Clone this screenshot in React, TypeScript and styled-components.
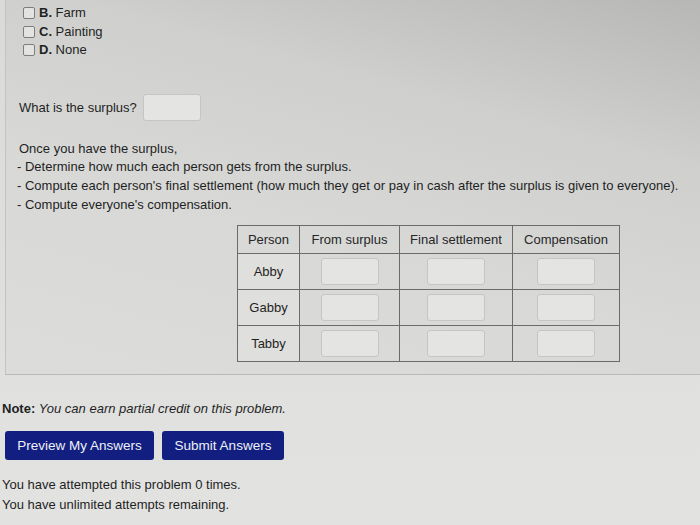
import React from "react";
import styled, { createGlobalStyle } from "styled-components";

const GlobalStyle = createGlobalStyle`
  html, body {
    margin: 0;
    padding: 0;
  }
  body {
    width: 700px;
    height: 525px;
    overflow: hidden;
    background: linear-gradient(180deg, #dadbd9 0%, #e0e1df 70%, #e2e3e1 100%);
    font-family: "Liberation Sans", Arial, sans-serif;
    font-size: 13px;
    color: #1f1f1f;
  }
`;

const Page = styled.div`
  display: flex;
  flex-direction: column;
  width: 700px;
  height: 525px;
`;

const ProblemPanel = styled.section`
  margin-left: 5px;
  padding: 4px 0 12px 13px;
  border-left: 1px solid #c3c4c2;
  border-bottom: 1px solid #b9bab8;
  background: linear-gradient(195deg, #b7b8b6 0%, #cfd0ce 30%, #d8d9d7 60%, #dcdddb 100%);
  display: flex;
  flex-direction: column;
  align-items: flex-start;
`;

const ChoiceList = styled.div`
  display: flex;
  flex-direction: column;
  padding-left: 4px;
`;

const Choice = styled.label`
  display: flex;
  align-items: center;
  gap: 4px;
  height: 18.5px;
  line-height: 18.5px;
`;

const Box = styled.span`
  width: 10px;
  height: 10px;
  border: 1px solid #7d7e7c;
  border-radius: 2px;
  background: #e3e4e2;
`;

const Letter = styled.b`
  font-weight: bold;
`;

const SurplusRow = styled.div`
  display: flex;
  align-items: center;
  gap: 6px;
  margin-top: 34px;
`;

const AnswerInput = styled.span<{ $w?: number }>`
  display: block;
  width: ${(p) => p.$w ?? 56}px;
  height: 25px;
  border: 1px solid #c4c6c3;
  border-radius: 3px;
  background: #e4e5e3;
`;

const Instructions = styled.div`
  margin-top: 19px;
  line-height: 18.7px;
`;

const Line = styled.div<{ $indent?: number }>`
  margin-left: ${(p) => p.$indent ?? 0}px;
`;

const Grid = styled.table`
  margin: 11px 0 0 218px;
  border-collapse: collapse;
  border: 1px solid #3e3f3d;
  table-layout: fixed;
  width: 378px;
`;

const HeadCell = styled.th<{ $w: number }>`
  width: ${(p) => p.$w}px;
  height: 27px;
  padding: 0;
  border: 1px solid #6b6c6a;
  font-weight: normal;
  text-align: center;
  vertical-align: middle;
  color: #262626;
`;

const NameCell = styled.td`
  height: 35px;
  padding: 0;
  border: 1px solid #6b6c6a;
  text-align: center;
  background: #dfe0de;
`;

const InputCell = styled.td`
  padding: 0;
  border: 1px solid #6b6c6a;
  text-align: center;
  vertical-align: middle;
`;

const CellInner = styled.div`
  display: flex;
  justify-content: center;
  align-items: center;
`;

const Footer = styled.div`
  display: flex;
  flex-direction: column;
  padding-left: 2px;
  margin-top: 25px;
`;

const Note = styled.div`
  line-height: 18px;
`;

const Buttons = styled.div`
  display: flex;
  gap: 8px;
  margin: 13px 0 0 3px;
`;

const Button = styled.button<{ $w: number }>`
  width: ${(p) => p.$w}px;
  height: 29px;
  border: none;
  border-radius: 3px;
  background: #121f80;
  color: #eef0f6;
  font-family: "Liberation Sans", Arial, sans-serif;
  font-size: 13.5px;
  padding: 0;
`;

const Attempts = styled.div`
  margin-top: 15px;
  line-height: 20px;
`;

const people = ["Abby", "Gabby", "Tabby"];

export default function App() {
  return (
    <>
      <GlobalStyle />
      <Page>
        <ProblemPanel>
          <ChoiceList>
            <Choice>
              <Box />
              <span>
                <Letter>B.</Letter> Farm
              </span>
            </Choice>
            <Choice>
              <Box />
              <span>
                <Letter>C.</Letter> Painting
              </span>
            </Choice>
            <Choice>
              <Box />
              <span>
                <Letter>D.</Letter> None
              </span>
            </Choice>
          </ChoiceList>

          <SurplusRow>
            <span>What is the surplus?</span>
            <AnswerInput $w={56} />
          </SurplusRow>

          <Instructions>
            <Line>Once you have the surplus,</Line>
            <Line $indent={-2}>- Determine how much each person gets from the surplus.</Line>
            <Line $indent={-2}>
              - Compute each person's final settlement (how much they get or pay in cash after the surplus is given to everyone).
            </Line>
            <Line $indent={-2}>- Compute everyone's compensation.</Line>
          </Instructions>

          <Grid>
            <thead>
              <tr>
                <HeadCell $w={61}>Person</HeadCell>
                <HeadCell $w={99}>From surplus</HeadCell>
                <HeadCell $w={112}>Final settlement</HeadCell>
                <HeadCell $w={106}>Compensation</HeadCell>
              </tr>
            </thead>
            <tbody>
              {people.map((p) => (
                <tr key={p}>
                  <NameCell>{p}</NameCell>
                  {[0, 1, 2].map((i) => (
                    <InputCell key={i}>
                      <CellInner>
                        <AnswerInput $w={56} />
                      </CellInner>
                    </InputCell>
                  ))}
                </tr>
              ))}
            </tbody>
          </Grid>
        </ProblemPanel>

        <Footer>
          <Note>
            <b>Note:</b> <i>You can earn partial credit on this problem.</i>
          </Note>
          <Buttons>
            <Button $w={149}>Preview My Answers</Button>
            <Button $w={122}>Submit Answers</Button>
          </Buttons>
          <Attempts>
            <div>You have attempted this problem 0 times.</div>
            <div>You have unlimited attempts remaining.</div>
          </Attempts>
        </Footer>
      </Page>
    </>
  );
}
